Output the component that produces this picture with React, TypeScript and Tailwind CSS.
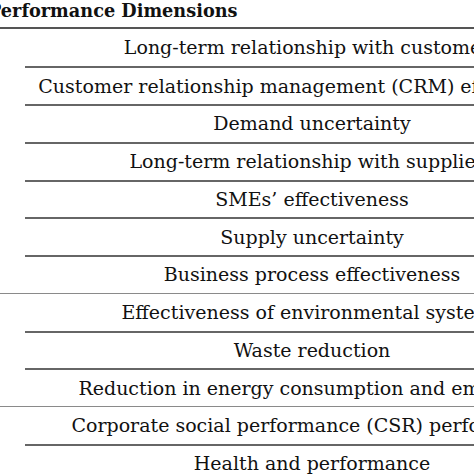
const groups: string[][] = [
  [
    "Long-term relationship with customers",
    "Customer relationship management (CRM) effectiveness",
    "Demand uncertainty",
    "Long-term relationship with suppliers",
    "SMEs\u2019 effectiveness",
    "Supply uncertainty",
    "Business process effectiveness",
  ],
  [
    "Effectiveness of environmental systems",
    "Waste reduction",
    "Reduction in energy consumption and emissions",
  ],
  [
    "Corporate social performance (CSR) performance",
    "Health and performance",
  ],
];

// first row of a group: full-width rule (or none right under the header)
const Row = ({ label, rule }: { label: string; rule: "full" | "part" | "none" }) => {
  return (
    <div className={`flex h-[37.75px] ${rule === "full" ? "border-t border-[#8a8a8a]" : ""}`}>
      <div className="w-[65px] shrink-0" />
      <div
        className={`w-[574px] shrink-0 flex items-center justify-center whitespace-nowrap ${
          rule === "part" ? "border-t-2 border-[#666]" : ""
        }`}
      >
        {label}
      </div>
    </div>
  );
};

export default function App() {
  return (
    <div className="w-[474px] h-[474px] overflow-hidden bg-white font-['DejaVu_Serif',serif] text-[19px] leading-none text-[#111]">
      <div className="ml-[-40px] w-[680px]">
        <div className="h-[28.5px] border-b-2 border-[#555] pl-[28px] pt-[2px] font-bold text-[17.7px]">
          Performance Dimensions
        </div>
        {groups.map((g, gi) => (
          <div key={gi}>
            {g.map((label, i) => (
              <Row
                key={label}
                label={label}
                rule={i > 0 ? "part" : gi === 0 ? "none" : "full"}
              />
            ))}
          </div>
        ))}
      </div>
    </div>
  );
}
